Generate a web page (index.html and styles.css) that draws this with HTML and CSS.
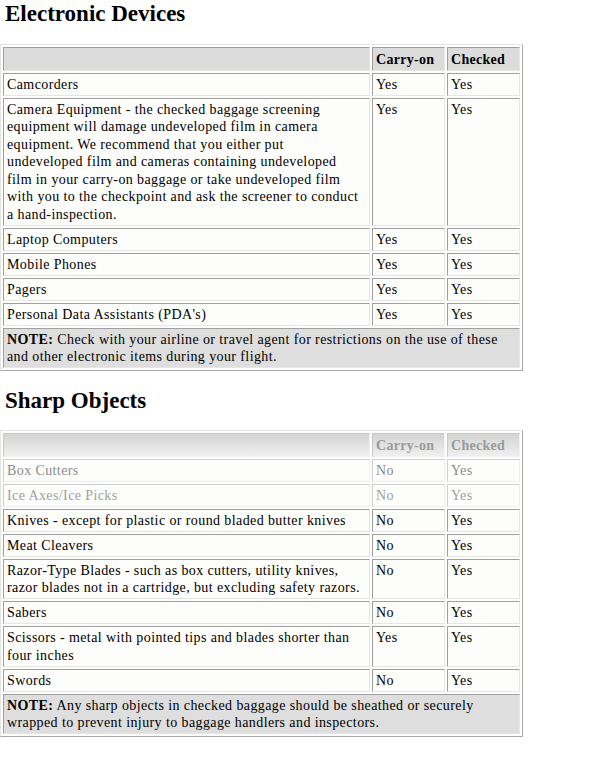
FILE: index.html
```html
<!DOCTYPE html>
<html>
<head>
<meta charset="utf-8">
<link rel="stylesheet" href="styles.css">
</head>
<body>
<h2 class="title">Electronic Devices</h2>
<table class="grid">
  <colgroup><col class="c-item"><col class="c-yn"><col class="c-yn"></colgroup>
  <tr class="head"><th></th><th>Carry-on</th><th>Checked</th></tr>
  <tr><td>Camcorders</td><td>Yes</td><td>Yes</td></tr>
  <tr><td>Camera Equipment - the checked baggage screening<br>equipment will damage undeveloped film in camera<br>equipment. We recommend that you either put<br>undeveloped film and cameras containing undeveloped<br>film in your carry-on baggage or take undeveloped film<br>with you to the checkpoint and ask the screener to conduct<br>a hand-inspection.</td><td>Yes</td><td>Yes</td></tr>
  <tr><td>Laptop Computers</td><td>Yes</td><td>Yes</td></tr>
  <tr><td>Mobile Phones</td><td>Yes</td><td>Yes</td></tr>
  <tr><td>Pagers</td><td>Yes</td><td>Yes</td></tr>
  <tr><td>Personal Data Assistants (PDA's)</td><td>Yes</td><td>Yes</td></tr>
  <tr class="note"><td colspan="3"><b>NOTE:</b> Check with your airline or travel agent for restrictions on the use of these and other electronic items during your flight.</td></tr>
</table>

<h2 class="title second">Sharp Objects</h2>
<table class="grid">
  <colgroup><col class="c-item"><col class="c-yn"><col class="c-yn"></colgroup>
  <tr class="head faded"><th></th><th>Carry-on</th><th>Checked</th></tr>
  <tr class="faded"><td>Box Cutters</td><td>No</td><td>Yes</td></tr>
  <tr class="faded light"><td>Ice Axes/Ice Picks</td><td>No</td><td>Yes</td></tr>
  <tr><td>Knives - except for plastic or round bladed butter knives</td><td>No</td><td>Yes</td></tr>
  <tr><td>Meat Cleavers</td><td>No</td><td>Yes</td></tr>
  <tr><td>Razor-Type Blades - such as box cutters, utility knives,<br>razor blades not in a cartridge, but excluding safety razors.</td><td>No</td><td>Yes</td></tr>
  <tr><td>Sabers</td><td>No</td><td>Yes</td></tr>
  <tr><td>Scissors - metal with pointed tips and blades shorter than<br>four inches</td><td>Yes</td><td>Yes</td></tr>
  <tr><td>Swords</td><td>No</td><td>Yes</td></tr>
  <tr class="note"><td colspan="3"><b>NOTE:</b> Any sharp objects in checked baggage should be sheathed or securely wrapped to prevent injury to baggage handlers and inspectors.</td></tr>
</table>
</body>
</html>
```
FILE: styles.css
```css
html, body {
  margin: 0;
  padding: 0;
  background: #ffffff;
  color: #000000;
  font-family: "Liberation Serif", "Times New Roman", serif;
}

.title {
  margin: 0 0 14px 5px;
  height: 30px;
  line-height: 28px;
  font-size: 23px;
  font-weight: bold;
}

.title.second {
  margin-top: 16px;
  margin-bottom: 13px;
}

.grid {
  width: 523px;
  table-layout: fixed;
  border-collapse: separate;
  border-spacing: 2px;
  border: 1px solid;
  border-color: #e4e4e0 #a8a8a8 #a8a8a8 #e4e4e0;
  background: #fdfdfb;
  font-size: 14px;
  letter-spacing: 0.4px;
}

.c-item { width: 367px; }
.c-yn { width: 73px; }

.grid td, .grid th {
  border: 1px solid;
  border-color: #a0a0a0 #e6e6e2 #e6e6e2 #a0a0a0;
  padding: 2px 0 1.5px 3px;
  line-height: 17.5px;
  vertical-align: top;
  text-align: left;
}

.grid th {
  background: #dcdcdc;
  font-weight: bold;
  letter-spacing: 0.3px;
  padding-top: 3px;
  padding-bottom: 1px;
}

.grid .note td {
  background: #dedede;
  padding-right: 4px;
}

.grid .faded th {
  background: linear-gradient(#d4d4d4, #efefef);
  color: #9a9a9a;
  border-color: #c8c8c8 #f0f0f0 #f0f0f0 #c8c8c8;
}

.grid .faded td {
  color: #8c8c8c;
  border-color: #d0d0d0 #eeeeee #eeeeee #d0d0d0;
}

.grid .faded.light td {
  color: #a0a0a0;
}
```
